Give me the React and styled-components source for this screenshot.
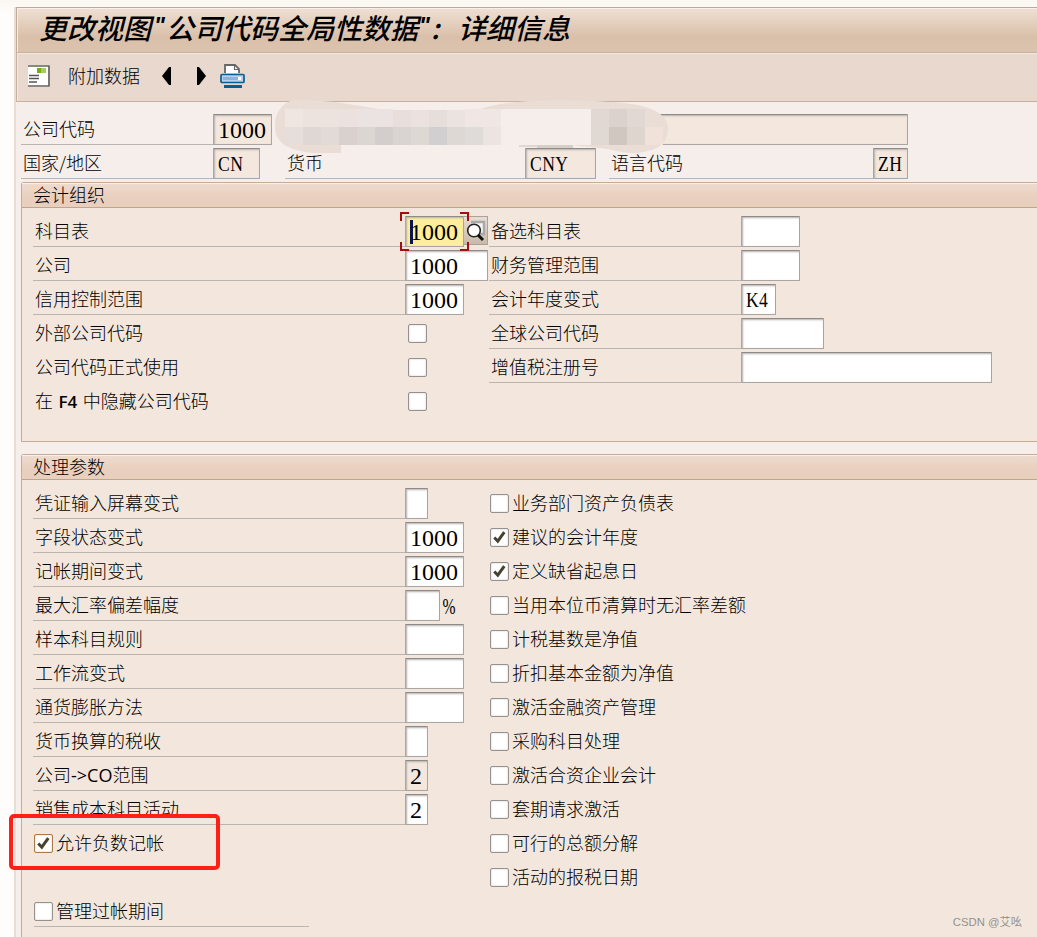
import React from "react";
import styled, { createGlobalStyle, css } from "styled-components";

const GlobalStyle = createGlobalStyle`
  * {
    box-sizing: border-box;
  }

  body {
    margin: 0;
    background: #fefcfa;
    overflow: hidden;
  }
`;

const Page = styled.div`
  position: relative;
  width: 1037px;
  height: 937px;
  padding: 7px 0 0 14px;
  overflow: hidden;
  background: linear-gradient(#fbf6f1, #fefdfc 14px);
  color: #000;
  font-family: "Noto Sans CJK SC", sans-serif;
  font-size: 18px;
  font-weight: 300;
  white-space: nowrap;
`;

const Window = styled.div`
  display: flex;
  flex-direction: column;
  height: 930px;
  border-left: 2px solid #e6dfd9;
  background: #f5eeeb;
`;

const TitleBar = styled.header`
  display: flex;
  align-items: center;
  flex: none;
  height: 45px;
  padding: 0 0 6px 22px;
  border: 1px solid #c3a995;
  border-width: 1px 0 0 1px;
  box-shadow: inset 1px 1px 0 #f8efe8;
  background: linear-gradient(#efe0d4, #dac0aa 65%, #dcc3ae);
`;

const Title = styled.h1`
  display: flex;
  margin: 0;
  color: #000;
  font-size: 28px;
  font-style: italic;
  font-weight: 500;
  line-height: 38px;
`;

const TitlePart = styled.span`
  width: ${({ $width }) => $width}px;
`;

const TitleQuote = styled(TitlePart)`
  padding-left: 1px;
  font-family: "Liberation Sans", sans-serif;
  font-size: 23px;
  font-weight: 700;
  line-height: 36px;
`;

const Toolbar = styled.nav`
  display: flex;
  align-items: center;
  flex: none;
  height: 50px;
  padding: 0 0 2px 11px;
  border: 1px solid #c8b0a0;
  border-width: 1px 0 1px 1px;
  box-shadow: inset 1px 1px 0 #f4eae4;
  background: #e8d8ce;
`;

const ToolbarText = styled.span`
  width: 72px;
  margin: 0 22px 2px 18px;
  line-height: 26px;
`;

const Icon = styled.svg`
  flex: none;
  margin-right: ${({ $gap = 0 }) => $gap}px;
`;

const HeaderFields = styled.section`
  flex: none;
  height: 80px;
  padding: 9px 0 0 5px;
`;

const Row = styled.div`
  display: flex;
  align-items: flex-end;
  height: 34px;
`;

const Label = styled.label`
  flex: none;
  width: ${({ $width }) => $width}px;
  height: 34px;
  padding: 3px 0 0 2px;
  margin-left: ${({ $indent = 0 }) => $indent}px;
  border-bottom: 1px solid ${({ $plain }) => ($plain ? "transparent" : "#b9b5b3")};
  line-height: 28px;
`;

const Latin = styled.span`
  margin: 0 ${({ $space = 0 }) => $space}px;
  font-family: "Open Sans", sans-serif;
  font-size: ${({ $bold }) => ($bold ? 17 : 18)}px;
  font-weight: ${({ $bold }) => ($bold ? 600 : 400)};
  line-height: 20px;
`;

const Field = styled.div`
  position: relative;
  flex: none;
  display: flex;
  align-items: center;
  width: ${({ $width }) => $width}px;
  height: 31px;
  margin-left: ${({ $indent = 0 }) => $indent}px;
  padding-left: 4px;
  border: 1px solid #aaa5a3;
  border-top-color: #8f8b89;
  border-radius: 1px;
  box-shadow: inset 1px 1px 2px #b5b0ad;
  background: ${({ $readOnly }) => ($readOnly ? "#f4e8de" : "#fff")};
  color: #000;
  font-family: "Liberation Serif", serif;
  font-size: 24px;
  font-weight: 400;
  line-height: 28px;

  ${({ $active }) =>
    $active &&
    css`
      background: #fdee9c;
    `}
`;

const Code = styled.span`
  flex: none;
  font-size: ${({ $letters }) => ($letters ? 22 : 24)}px;
  letter-spacing: ${({ $letters }) => ($letters ? 0.5 : 0)}px;
  transform: scaleX(${({ $letters }) => ($letters ? 0.8 : 1)});
  transform-origin: left;
`;

const Caret = styled.i`
  position: absolute;
  top: 3px;
  left: 4px;
  width: 3px;
  height: 24px;
  background: #0a1455;
`;

const FocusCorners = styled.svg`
  position: absolute;
  z-index: 1;
  top: -5px;
  left: -6px;
`;

const SearchButton = styled.button`
  flex: none;
  width: 24px;
  height: 29px;
  margin-bottom: 2px;
  padding: 0;
  border: 1px solid #a9a29c;
  border-left: 0;
  background: linear-gradient(#e8ddd4, #c9b9aa);
  line-height: 0;
`;

const Group = styled.fieldset`
  flex: none;
  height: ${({ $height }) => $height}px;
  min-width: 0;
  margin: 0 0 ${({ $gap = 0 }) => $gap}px 5px;
  padding: 0;
  border: 1px solid #c9ac93;
  border-right: 0;
  border-radius: 3px 0 0 0;
  background: #f3e7dd;
`;

const GroupTitle = styled.h2`
  height: 25px;
  margin: 0;
  padding-left: 11px;
  border-bottom: 1px solid #c0a48d;
  box-shadow: inset 0 1px 0 #faefe6;
  background: linear-gradient(#eedcd0, #e9cfbd 60%);
  font-size: 18px;
  font-weight: 300;
  line-height: 22px;
`;

const GroupBody = styled.div`
  display: flex;
  padding: 5px 0 0 11px;
`;

const Column = styled.div`
  flex: none;
  width: ${({ $width }) => $width}px;
`;

const Box = styled.span`
  flex: none;
  display: grid;
  place-items: center;
  width: 19px;
  height: 19px;
  margin: 0 3px 0 ${({ $left = 0 }) => $left}px;
  border: 1px solid ${({ $focused }) => ($focused ? "#a97a45" : "#96918e")};
  border-radius: 2px;
  box-shadow: inset 0 0 2px #c9c5c2;
  background: #fff;
`;

const CheckLine = styled.label`
  display: flex;
  align-items: center;
  width: ${({ $width }) => ($width ? `${$width}px` : "auto")};
  height: 34px;
  margin-left: 1px;
  padding-top: 3px;
  border-bottom: 1px solid ${({ $width }) => ($width ? "#b9b5b3" : "transparent")};
`;

const CheckText = styled.span`
  padding-bottom: 2px;
  line-height: 26px;
`;

const BoxHolder = styled.span`
  display: flex;
  align-items: center;
  height: 34px;
  padding-top: 2px;
`;

const Percent = styled.span`
  width: 14px;
  padding-left: 4px;
  font-family: "Liberation Serif", serif;
  font-size: 24px;
  font-weight: 400;
  line-height: 30px;
  transform: scaleX(0.65);
  transform-origin: left;
`;

const Spacer = styled.div`
  height: 34px;
`;

const Redaction = styled.svg`
  position: absolute;
  top: 95px;
  left: 270px;
`;

const Highlight = styled.div`
  position: absolute;
  top: 814px;
  left: 9px;
  width: 211px;
  height: 56px;
  border: 4px solid #ff2015;
  border-radius: 5px;
`;

const Watermark = styled.div`
  position: absolute;
  right: 15px;
  bottom: 6px;
  color: #96908b;
  font-family: "Liberation Sans", "Noto Sans CJK SC", sans-serif;
  font-size: 11.3px;
  font-weight: 400;
  line-height: 18px;
`;

const accountingLeft = [
  { label: "科目表", value: "1000", width: 59, active: true },
  { label: "公司", value: "1000", width: 83 },
  { label: "信用控制范围", value: "1000", width: 59 },
  { label: "外部公司代码", check: true },
  { label: "公司代码正式使用", check: true },
  {
    label: (
      <>
        在
        <Latin $bold $space={5.5}>
          F4
        </Latin>
        中隐藏公司代码
      </>
    ),
    check: true,
  },
];

const accountingRight = [
  { label: "备选科目表", width: 59 },
  { label: "财务管理范围", width: 59 },
  { label: "会计年度变式", value: "K4", width: 35 },
  { label: "全球公司代码", width: 83 },
  { label: "增值税注册号", width: 251 },
];

const parameters = [
  { label: "凭证输入屏幕变式", width: 23 },
  { label: "字段状态变式", value: "1000", width: 59 },
  { label: "记帐期间变式", value: "1000", width: 59 },
  { label: "最大汇率偏差幅度", width: 35, unit: "%" },
  { label: "样本科目规则", width: 59 },
  { label: "工作流变式", width: 59 },
  { label: "通货膨胀方法", width: 59 },
  { label: "货币换算的税收", width: 23 },
  {
    label: (
      <>
        公司<Latin>-&gt;CO</Latin>范围
      </>
    ),
    value: "2",
    width: 23,
    readOnly: true,
  },
  { label: "销售成本科目活动", value: "2", width: 23 },
];

const options = [
  ["业务部门资产负债表", false],
  ["建议的会计年度", true],
  ["定义缺省起息日", true],
  ["当用本位币清算时无汇率差额", false],
  ["计税基数是净值", false],
  ["折扣基本金额为净值", false],
  ["激活金融资产管理", false],
  ["采购科目处理", false],
  ["激活合资企业会计", false],
  ["套期请求激活", false],
  ["可行的总额分解", false],
  ["活动的报税日期", false],
];

// x, y, width, height, fill of every mosaic tile
const tiles = [
  [15, 14, 18, 18, "#f0e6e1"],
  [33, 14, 36, 18, "#ece3df"],
  [69, 14, 18, 18, "#ebe1df"],
  [87, 14, 36, 18, "#ebe3e1"],
  [123, 15, 18, 17, "#e8dfdd"],
  [141, 15, 18, 17, "#ebe1de"],
  [159, 15, 18, 17, "#e6dedb"],
  [177, 15, 18, 17, "#ebe3e0"],
  [195, 14, 18, 18, "#f0e7e4"],
  [213, 14, 18, 18, "#eee7e3"],
  [15, 32, 18, 18, "#e5dedb"],
  [33, 32, 18, 18, "#ded7d3"],
  [51, 32, 18, 18, "#e1dad7"],
  [69, 32, 18, 18, "#d8d1ce"],
  [87, 32, 18, 18, "#dcd6d3"],
  [105, 32, 18, 18, "#d3cecb"],
  [123, 32, 18, 18, "#d9d4d1"],
  [141, 32, 18, 18, "#ded8d5"],
  [159, 32, 18, 18, "#d1cfd0"],
  [177, 32, 18, 18, "#ddd8d4"],
  [195, 32, 18, 18, "#dfdbd8"],
  [213, 32, 18, 18, "#ebe4e1"],
  [231, 14, 90, 36, "#f5eeeb"],
  [249, 50, 18, 2, "#ded7d3"],
  [267, 50, 36, 3, "#d6cec9"],
  [321, 14, 18, 18, "#e1d8d4"],
  [339, 14, 18, 18, "#dcd2cd"],
  [357, 14, 18, 18, "#e1d7d3"],
  [321, 32, 18, 18, "#e0d8d3"],
  [339, 32, 18, 18, "#d1c7c1"],
  [357, 32, 18, 18, "#ded6ce"],
  [375, 32, 18, 18, "#f0e2db"],
];

const CheckMark = () => (
  <svg width="13" height="14" viewBox="0 0 13 14">
    <path
      d="M1.3 7.5 4.8 11.2 11.3 2.2"
      fill="none"
      stroke="#45422f"
      strokeWidth="3"
    />
  </svg>
);

const CheckBox = ({ checked, focused, left }) => (
  <Box $focused={focused} $left={left}>
    {checked && <CheckMark />}
  </Box>
);

const ValueField = ({ value, width, readOnly, active, indent }) => (
  <Field $width={width} $readOnly={readOnly} $active={active} $indent={indent}>
    {active && <Caret />}
    {value && <Code $letters={/[A-Z]/.test(value)}>{value}</Code>}
    {active && (
      <FocusCorners width="69" height="40" fill="none">
        <path
          d="M1 9V1h8M60 1h8v8M1 30v8h8M60 38h8v-8"
          stroke="#a80d0d"
          strokeWidth="2"
        />
      </FocusCorners>
    )}
  </Field>
);

const SearchHelp = () => (
  <SearchButton>
    <svg width="22" height="26" viewBox="0 0 22 26">
      <path d="M6 4h13v12h-5" fill="#f6f4f2" stroke="#a8a8aa" strokeWidth="2.4" />
      <circle cx="9" cy="12.5" r="6.3" fill="#fff" stroke="#222" strokeWidth="1.6" />
      <path d="m13 17 5 5" stroke="#111" strokeWidth="3" />
    </svg>
  </SearchButton>
);

const FormRow = ({ item, labelWidth }) => (
  <Row>
    <Label $width={labelWidth} $plain={item.check}>
      {item.label}
    </Label>
    {item.check ? (
      <BoxHolder>
        <CheckBox left={3} />
      </BoxHolder>
    ) : (
      <ValueField {...item} />
    )}
    {item.active && <SearchHelp />}
    {item.unit && <Percent>{item.unit}</Percent>}
  </Row>
);

const MainToolbar = () => (
  <Toolbar>
    <Icon width="22" height="22" viewBox="0 0 22 22">
      <path d="M0 0h22v22H0z" fill="#fff" />
      <path d="M0 1h21v20H0" fill="none" stroke="#626262" strokeWidth="1.7" />
      <path d="M9 3h4v5H9z" fill="#70ae18" />
      <path d="M13 3h5v5h-5z" fill="#a3cb66" />
      <path d="M1 10.5h10M1 13.5h10M1 17h8" stroke="#555" strokeWidth="1.4" />
    </Icon>
    <ToolbarText>附加数据</ToolbarText>
    <Icon width="9" height="18" $gap={26}>
      <path d="M9 0v18H7L0 9l7-9z" fill="#000" />
    </Icon>
    <Icon width="9" height="18" $gap={14}>
      <path d="M0 0v18h2l7-9-7-9z" fill="#000" />
    </Icon>
    <Icon width="25" height="24" viewBox="0 0 25 24">
      <path d="M5 9V1h10l4 4v4" fill="#fff" stroke="#666" strokeWidth="1.8" />
      <path d="M14.5 1v4.5H19" fill="none" stroke="#666" strokeWidth="1.2" />
      <rect x="1" y="10.5" width="23" height="8" rx="1" fill="#bcd0e8" stroke="#075f92" strokeWidth="1.7" />
      <path d="M3 13h15v3H3z" fill="#8eb2d8" />
      <path d="M18 13h3v3h-3z" fill="#fff" />
      <path d="M4 21h18v3H4z" fill="#075f92" />
    </Icon>
  </Toolbar>
);

const App = () => (
  <Page>
    <GlobalStyle />
    <Window>
      <TitleBar>
        <Title>
          <TitlePart $width={114}>更改视图</TitlePart>
          <TitleQuote $width={13}>"</TitleQuote>
          <TitlePart $width={252}>公司代码全局性数据</TitlePart>
          <TitleQuote $width={13}>"</TitleQuote>
          <TitlePart $width={27}>:</TitlePart>
          <TitlePart $width={112}>详细信息</TitlePart>
        </Title>
      </TitleBar>
      <MainToolbar />

      <HeaderFields>
        <Row>
          <Label $width={192}>公司代码</Label>
          <ValueField value="1000" width={59} readOnly />
          <ValueField width={268} indent={368} readOnly />
        </Row>
        <Row>
          <Label $width={192}>国家/地区</Label>
          <ValueField value="CN" width={47} readOnly />
          <Label $width={240} $indent={25}>
            货币
          </Label>
          <ValueField value="CNY" width={71} readOnly />
          <Label $width={264} $indent={13}>
            语言代码
          </Label>
          <ValueField value="ZH" width={35} readOnly />
        </Row>
      </HeaderFields>

      <Group $height={260} $gap={12}>
        <GroupTitle>会计组织</GroupTitle>
        <GroupBody>
          <Column $width={456}>
            {accountingLeft.map((item, index) => (
              <FormRow key={index} item={item} labelWidth={372} />
            ))}
          </Column>
          <Column $width={548}>
            {accountingRight.map((item, index) => (
              <FormRow key={index} item={item} labelWidth={252} />
            ))}
          </Column>
        </GroupBody>
      </Group>

      <Group $height={500}>
        <GroupTitle>处理参数</GroupTitle>
        <GroupBody>
          <Column $width={456}>
            {parameters.map((item, index) => (
              <FormRow key={index} item={item} labelWidth={372} />
            ))}
            <CheckLine>
              <CheckBox checked focused />
              <CheckText>允许负数记帐</CheckText>
            </CheckLine>
            <Spacer />
            <CheckLine $width={275}>
              <CheckBox />
              <CheckText>管理过帐期间</CheckText>
            </CheckLine>
          </Column>
          <Column $width={548}>
            {options.map(([label, checked]) => (
              <CheckLine key={label}>
                <CheckBox checked={checked} />
                <CheckText>{label}</CheckText>
              </CheckLine>
            ))}
          </Column>
        </GroupBody>
      </Group>
    </Window>

    <Redaction width="400" height="60">
      <path
        d="M24 5C70 5 93 12 137 19c28 2 52 1 67-2 28-15 105-12 135-10 36 1 59 10 59 26 0 15-8 22-31 25-13 1-25-4-38-5-10-1-25-3-30-3H71v8H43C16 55 5 47 5 31 5 18 12 7 24 5Z"
        fill="#e9ddd6"
      />
      {tiles.map(([x, y, width, height, fill]) => (
        <rect key={`${x}-${y}`} x={x} y={y} width={width} height={height} fill={fill} />
      ))}
    </Redaction>
    <Highlight />
    <Watermark>CSDN @艾吆</Watermark>
  </Page>
);

export default App;
